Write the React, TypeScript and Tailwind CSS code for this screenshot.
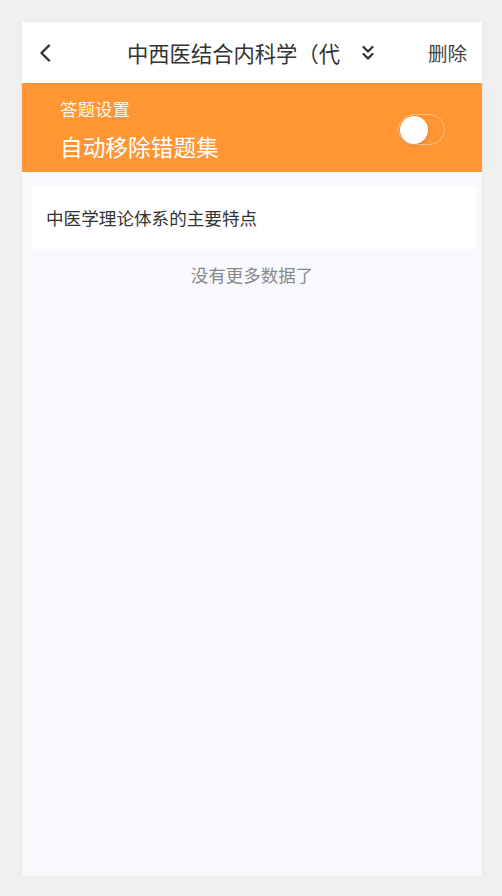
import React from 'react';

const font = { fontFamily: '"Noto Sans CJK SC", "Noto Sans", sans-serif' };

const BackIcon: React.FC = () => (
  <svg width="12" height="18" viewBox="0 0 12 18" fill="none">
    <path d="M10 1.5L2.5 9L10 16.5" stroke="#333" strokeWidth="2.4" strokeLinecap="round" strokeLinejoin="round" />
  </svg>
);

const DoubleDown: React.FC = () => (
  <svg width="12" height="16" viewBox="0 0 12 16" fill="none">
    <path d="M1.5 2L6 6.5L10.5 2" stroke="#333" strokeWidth="2.2" strokeLinecap="round" strokeLinejoin="round" />
    <path d="M1.5 9L6 13.5L10.5 9" stroke="#333" strokeWidth="2.2" strokeLinecap="round" strokeLinejoin="round" />
  </svg>
);

const WrongQuestions: React.FC = () => {
  return (
    <div className="h-[896px] bg-[#f0f0f0] pl-[22px] pr-[20px] pt-[22px] pb-[20px]" style={font}>
      <div className="flex h-full flex-col bg-[#f8f9fd] shadow-[0_0_3px_rgba(0,0,0,0.06)]">
        {/* 顶部导航 */}
        <div className="flex h-[61px] items-center bg-white pl-[17px] pr-[15px]">
          <BackIcon />
          <span className="ml-[76px] text-[21.3px] leading-[28px] text-[#333]">中西医结合内科学（代</span>
          <span className="ml-[22px] mt-[1px]">
            <DoubleDown />
          </span>
          <span className="ml-auto text-[19.5px] leading-[26px] text-[#444]">删除</span>
        </div>

        {/* 答题设置 */}
        <div className="flex h-[89px] items-center justify-between bg-[#ff9533] pl-[38px] pr-[37px]">
          <div className="flex flex-col pt-[4px]">
            <span className="text-[17.5px] leading-[22px] text-white/90">答题设置</span>
            <span className="mt-[12px] text-[22.7px] leading-[30px] text-white">自动移除错题集</span>
          </div>
          <div className="mt-[4px] flex h-[31px] w-[47px] items-center rounded-full border border-white/40 pl-[1px]">
            <div className="h-[28px] w-[28px] rounded-full bg-white shadow-[0_1px_3px_rgba(0,0,0,0.2)]" />
          </div>
        </div>

        {/* 列表 */}
        <div className="ml-[10px] mr-[6px] mt-[14px] flex h-[63px] items-center bg-white px-[14px]">
          <span className="text-[17.6px] leading-[24px] text-[#333]">中医学理论体系的主要特点</span>
        </div>

        <p className="mt-[14px] text-center text-[17.5px] leading-[24px] text-[#888]">没有更多数据了</p>
      </div>
    </div>
  );
};

export default function App() {
  return <WrongQuestions />;
}
